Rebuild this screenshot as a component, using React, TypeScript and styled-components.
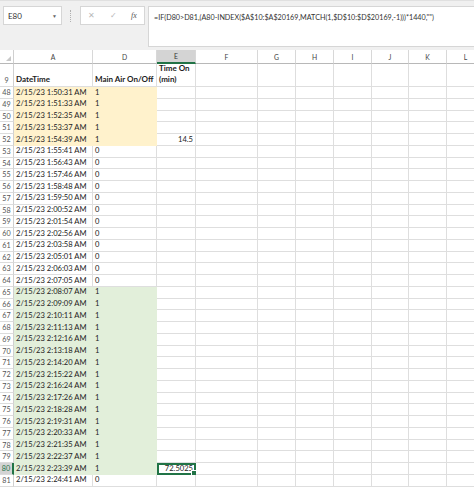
import React from 'react';
import styled, { createGlobalStyle, css } from 'styled-components';

const GlobalStyle = createGlobalStyle`
  html, body {
    margin: 0;
    padding: 0;
    background: #ffffff;
  }
  body {
    font-family: Lato, "Liberation Sans", sans-serif;
    overflow: hidden;
  }
`;

type Fill = 'peach' | 'green' | undefined;

const fills: Record<string, string> = {
  peach: '#fff2cc',
  green: '#e2efda',
};

const Page = styled.div`
  width: 474px;
  height: 489px;
  overflow: hidden;
  display: flex;
  flex-direction: column;
`;

const FormulaBar = styled.div`
  height: 50px;
  background: #f0f0f0;
  display: flex;
  align-items: flex-start;
  padding: 5px 0 0 3px;
  box-sizing: border-box;
  border-top: 1px solid #e0e0e0;
`;

const NameBox = styled.div`
  width: 59px;
  height: 19px;
  box-sizing: border-box;
  background: #fff;
  border: 1px solid #d6d6d6;
  display: flex;
  align-items: center;
  justify-content: space-between;
  padding: 0 4px 0 4px;
  font-size: 8px;
  color: #333;
`;

const Caret = styled.span`
  font-size: 5px;
  color: #666;
`;

const Grip = styled.div`
  width: 1px;
  height: 12px;
  margin: 4px 8px 0 8px;
  border-left: 1px dotted #b0b0b0;
`;

const FxBox = styled.div`
  width: 65px;
  height: 19px;
  box-sizing: border-box;
  background: #fff;
  border: 1px solid #d6d6d6;
  display: flex;
  align-items: center;
  justify-content: space-around;
  color: #b8b8b8;
  font-size: 8px;
  font-family: "Liberation Sans", sans-serif;
`;

const Fx = styled.span`
  font-family: "Liberation Serif", serif;
  font-style: italic;
  color: #555;
  font-size: 8px;
`;

const FormulaInput = styled.div`
  flex: 1;
  margin-left: 3px;
  height: 41px;
  box-sizing: border-box;
  background: #fff;
  border: 1px solid #d6d6d6;
  border-right: none;
  padding: 6px 0 0 5px;
  font-size: 7.2px;
  color: #333;
  white-space: nowrap;
  overflow: hidden;
`;

const Sheet = styled.div`
  display: grid;
  grid-template-columns: 14px 79px 64px 39px 62px 38px 38px 38px 37px 38px 38px;
  grid-auto-rows: 11.75px;
  grid-template-rows: 14px 23px;
  font-size: 7.6px;
  color: #222;
`;

const Corner = styled.div`
  background: #fff;
  border-right: 1px solid #d0d0d0;
  border-bottom: 1px solid #b8b8b8;
  position: relative;
  &::after {
    content: '';
    position: absolute;
    right: 2px;
    bottom: 2px;
    border-left: 5px solid transparent;
    border-bottom: 5px solid #c8c8c8;
  }
`;

const ColHeader = styled.div<{ $active?: boolean }>`
  background: ${p => (p.$active ? '#d4d4d4' : '#fff')};
  border-right: 1px solid #d8d8d8;
  border-bottom: ${p => (p.$active ? '2px solid #217346' : '1px solid #b8b8b8')};
  color: ${p => (p.$active ? '#333' : '#444')};
  font-size: 6.8px;
  display: flex;
  align-items: center;
  justify-content: center;
  box-sizing: border-box;
`;

const RowHeader = styled.div<{ $active?: boolean }>`
  background: ${p => (p.$active ? '#d4d4d4' : '#fff')};
  border-right: ${p => (p.$active ? '2px solid #217346' : '1px solid #d0d0d0')};
  border-bottom: 1px solid #dcdcdc;
  color: ${p => (p.$active ? '#217346' : '#555')};
  font-size: 7.2px;
  display: flex;
  align-items: flex-end;
  justify-content: center;
  padding-bottom: 1.5px;
  box-sizing: border-box;
  line-height: 1;
`;

const Cell = styled.div<{ $fill?: Fill; $right?: boolean; $bold?: boolean; $selected?: boolean }>`
  position: relative;
  box-sizing: border-box;
  background: ${p => (p.$fill ? fills[p.$fill] : '#fff')};
  border-right: 1px solid ${p => (p.$fill ? fills[p.$fill] : '#dedede')};
  border-bottom: 1px solid ${p => (p.$fill ? fills[p.$fill] : '#dedede')};
  padding: 0 2px 1.5px 2px;
  display: flex;
  align-items: flex-end;
  justify-content: ${p => (p.$right ? 'flex-end' : 'flex-start')};
  white-space: nowrap;
  line-height: 1;
  font-weight: ${p => (p.$bold ? 700 : 400)};
  ${p =>
    p.$bold &&
    css`
      font-size: 8px;
    `}
  ${p =>
    p.$selected &&
    css`
      border: 2px solid #217346;
      padding: 0 1px 0.5px 1px;
    `}
`;

const HeadText = styled.span`
  white-space: normal;
  line-height: 11px;
`;

const Handle = styled.span`
  position: absolute;
  right: -3px;
  bottom: -3px;
  width: 4px;
  height: 4px;
  background: #217346;
  border: 1px solid #fff;
`;

const columns = ['A', 'D', 'E', 'F', 'G', 'H', 'I', 'J', 'K', 'L'];

const times = [
  '1:50:31', '1:51:33', '1:52:35', '1:53:37', '1:54:39', '1:55:41', '1:56:43', '1:57:46',
  '1:58:48', '1:59:50', '2:00:52', '2:01:54', '2:02:56', '2:03:58', '2:05:01', '2:06:03',
  '2:07:05', '2:08:07', '2:09:09', '2:10:11', '2:11:13', '2:12:16', '2:13:18', '2:14:20',
  '2:15:22', '2:16:24', '2:17:26', '2:18:28', '2:19:31', '2:20:33', '2:21:35', '2:22:37',
  '2:23:39', '2:24:41',
];

const rows = times.map((t, i) => {
  const n = 48 + i;
  const on = n <= 52 || (n >= 65 && n <= 80);
  const fill: Fill = n <= 52 ? 'peach' : n >= 65 && n <= 80 ? 'green' : undefined;
  const timeOn = n === 52 ? '14.5' : n === 80 ? '72.5025' : '';
  return { n, date: `2/15/23 ${t} AM`, on: on ? '1' : '0', fill, timeOn };
});

export default function App() {
  return (
    <Page>
      <GlobalStyle />
      <FormulaBar>
        <NameBox>
          E80
          <Caret>▼</Caret>
        </NameBox>
        <Grip />
        <FxBox>
          <span>✕</span>
          <span>✓</span>
          <Fx>fx</Fx>
        </FxBox>
        <FormulaInput>=IF(D80&gt;D81,(A80-INDEX($A$10:$A$20169,MATCH(1,$D$10:$D$20169,-1)))*1440,"")</FormulaInput>
      </FormulaBar>

      <Sheet>
        <Corner />
        {columns.map(c => (
          <ColHeader key={c} $active={c === 'E'}>{c}</ColHeader>
        ))}

        <RowHeader>9</RowHeader>
        <Cell $bold><HeadText>DateTime</HeadText></Cell>
        <Cell $bold><HeadText>Main Air On/Off</HeadText></Cell>
        <Cell $bold><HeadText>Time On (min)</HeadText></Cell>
        {columns.slice(3).map(c => (
          <Cell key={c} />
        ))}

        {rows.map(r => (
          <React.Fragment key={r.n}>
            <RowHeader $active={r.n === 80}>{r.n}</RowHeader>
            <Cell $fill={r.fill}>{r.date}</Cell>
            <Cell $fill={r.fill}>{r.on}</Cell>
            <Cell $right $selected={r.n === 80}>
              {r.timeOn}
              {r.n === 80 && <Handle />}
            </Cell>
            {columns.slice(3).map(c => (
              <Cell key={c} />
            ))}
          </React.Fragment>
        ))}
      </Sheet>
    </Page>
  );
}
